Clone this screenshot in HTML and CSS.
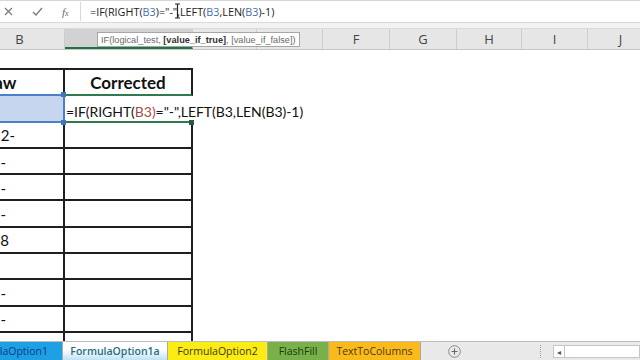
FILE: index.html
```html
<!DOCTYPE html>
<html lang="en">
<head>
    <meta charset="UTF-8">
    <meta name="viewport" content="width=device-width, initial-scale=1.0">
    <title>FormulaOption1a - Trailing minus</title>
    <link rel="stylesheet" href="styles.css">
</head>
<body>
    <div class="app">
        <!-- barre de formule -->
        <div class="formula-bar">
            <div class="fb-buttons">
                <svg class="fb-cancel" width="9" height="9" viewBox="0 0 9 9">
                    <path d="M1 1 L8 8 M8 1 L1 8" stroke="#7a7a7a" stroke-width="1.2" fill="none"/>
                </svg>
                <svg class="fb-enter" width="11" height="9" viewBox="0 0 11 9">
                    <path d="M1 5 L4 8 L10 1" stroke="#7a7a7a" stroke-width="1.3" fill="none"/>
                </svg>
                <span class="fb-fx">f<small>x</small></span>
            </div>
            <div class="fb-input">
                <span class="fb-text">=IF(RIGHT(<span class="ref">B3</span>)="-",LEFT(<span class="ref">B3</span>,LEN(<span class="ref">B3</span>)-1)</span>
                <svg class="ibeam" width="7" height="16" viewBox="0 0 7 16">
                    <path d="M1 1 H6 M3.5 1 V15 M1 15 H6" stroke="#222" stroke-width="1.2" fill="none"/>
                </svg>
            </div>
        </div>
        <div class="fb-gap"></div>

        <!-- en-tetes de colonnes -->
        <div class="col-headers">
            <div class="col-track">
                <div class="col-head w-b">B</div>
                <div class="col-head w-c selected"></div>
                <div class="col-head w-d"></div>
                <div class="col-head w-e"></div>
                <div class="col-head w-f">F</div>
                <div class="col-head w-g">G</div>
                <div class="col-head w-h">H</div>
                <div class="col-head w-i">I</div>
                <div class="col-head w-j">J</div>
            </div>
            <div class="tooltip">IF(logical_test, <b>[value_if_true]</b>, [value_if_false])</div>
        </div>

        <!-- feuille -->
        <div class="sheet">
            <div class="table">
                <div class="cell head">Raw</div>
                <div class="cell head head-active">Corrected</div>

                <div class="cell ref-cell"><span class="corner top"></span><span class="corner bottom"></span></div>
                <div class="cell editing">=IF(RIGHT(<span class="ref-red">B3</span><span class="paren">)</span>="-",LEFT(B3,LEN(B3)-1)<span class="fill-handle"></span></div>

                <div class="cell raw raw-long">45678912-</div><div class="cell"></div>
                <div class="cell raw raw-short">1234567 -</div><div class="cell"></div>
                <div class="cell raw raw-short">7654321 -</div><div class="cell"></div>
                <div class="cell raw raw-short">9876543 -</div><div class="cell"></div>
                <div class="cell raw raw-mid">12345678</div><div class="cell"></div>
                <div class="cell"></div><div class="cell"></div>
                <div class="cell raw raw-short">3456789 -</div><div class="cell"></div>
                <div class="cell raw raw-short">2468135 -</div><div class="cell"></div>
                <div class="cell"></div><div class="cell"></div>
            </div>
        </div>

        <!-- onglets -->
        <div class="tabs">
            <div class="tab tab-blue"><span>FormulaOption1</span></div>
            <div class="tab tab-active">FormulaOption1a</div>
            <div class="tab tab-yellow">FormulaOption2</div>
            <div class="tab tab-green">FlashFill</div>
            <div class="tab tab-orange">TextToColumns</div>
            <div class="tab-add">
                <svg width="13" height="13" viewBox="0 0 13 13">
                    <circle cx="6.5" cy="6.5" r="5.8" stroke="#8a8a8a" stroke-width="1" fill="none"/>
                    <path d="M6.5 3.5 V9.5 M3.5 6.5 H9.5" stroke="#666" stroke-width="1.1"/>
                </svg>
            </div>
            <div class="tab-split"></div>
            <div class="hscroll">
                <div class="hscroll-btn">◂</div>
                <div class="hscroll-track"></div>
            </div>
        </div>
    </div>
</body>
</html>
```

FILE: styles.css
```css
* {
    margin: 0;
    padding: 0;
    box-sizing: border-box;
}

body {
    width: 640px;
    height: 360px;
    overflow: hidden;
    background: #ffffff;
    font-family: 'Open Sans', 'Liberation Sans', sans-serif;
    color: #222;
}

.app {
    display: flex;
    flex-direction: column;
    height: 360px;
}

/* barre de formule */
.formula-bar {
    height: 23px;
    display: flex;
    border-top: 1px solid #d6d6d6;
    border-bottom: 1px solid #dadada;
    background: #ffffff;
}

.fb-buttons {
    width: 81px;
    display: flex;
    align-items: center;
    padding-left: 4px;
    border-right: 1px solid #d9d9d9;
    margin: 1px 0;
}

.fb-enter {
    margin-left: 19px;
}

.fb-fx {
    margin-left: 19px;
    font-family: 'Liberation Serif', serif;
    font-style: italic;
    font-size: 11px;
    color: #666;
}

.fb-fx small {
    font-size: 8px;
}

.fb-input {
    flex: 1;
    position: relative;
    display: flex;
    align-items: center;
    padding-left: 9px;
    font-size: 10.8px;
    color: #222;
}

.fb-text {
    white-space: nowrap;
}

.fb-input .ref {
    color: #4a6fae;
}

.ibeam {
    position: absolute;
    left: 93px;
    top: 2px;
}

.fb-gap {
    height: 5px;
    background: #f2f2f2;
}

/* en-tetes de colonnes */
.col-headers {
    position: relative;
    height: 22px;
    background: #e6e6e6;
    border-top: 1px solid #d9d9d9;
    border-bottom: 1px solid #c4c4c4;
    overflow: hidden;
}

.col-track {
    display: flex;
    height: 100%;
    margin-left: -25px;
}

.col-head {
    flex-shrink: 0;
    display: flex;
    align-items: center;
    justify-content: center;
    border-right: 1px solid #cdcdcd;
    font-size: 13px;
    color: #444;
}

.col-head.selected {
    background: #d2d2d2;
    border-bottom: 2px solid #217346;
}

.w-b { width: 90px; }
.w-c { width: 128px; }
.w-d { width: 64px; }
.w-e { width: 66px; }
.w-f { width: 67px; }
.w-g { width: 67px; }
.w-h { width: 65px; }
.w-i { width: 66px; }
.w-j { width: 66px; }

.tooltip {
    position: absolute;
    left: 97px;
    top: 3px;
    height: 15px;
    padding: 0 3px;
    display: flex;
    align-items: center;
    background: #ffffff;
    border: 1px solid #a6a6a6;
    font-family: 'Liberation Sans', sans-serif;
    font-size: 9.2px;
    color: #6a6a6a;
    white-space: pre;
}

.tooltip b {
    color: #333;
}

/* feuille */
.sheet {
    flex: 1;
    overflow: hidden;
    background: #ffffff;
}

.table {
    display: grid;
    grid-template-columns: 128px 128px;
    grid-auto-rows: 26.3px;
    width: 256px;
    margin: 18px 0 0 -63px;
    border-top: 2px solid #1f1f1f;
}

.cell {
    position: relative;
    display: flex;
    align-items: center;
    padding: 1px 3px 0;
    border-right: 2px solid #1f1f1f;
    border-bottom: 2px solid #1f1f1f;
    font-family: 'Lato', 'Open Sans', sans-serif;
    font-size: 15px;
    color: #111;
    white-space: pre;
    overflow: hidden;
}

/* la colonne B est en partie hors ecran : on cale la fin du texte */
.cell.raw {
    justify-content: flex-end;
}

.raw-long { padding-right: 48px; }
.raw-mid { padding-right: 54px; }
.raw-short { padding-right: 57px; }

.cell.head {
    justify-content: center;
    font-weight: 700;
    font-size: 17px;
}

.cell.head:first-child {
    border-bottom-color: #4a7fc9;
}

.head-active {
    border-bottom-color: #2f7a4f !important;
}

.ref-cell {
    background: #c6d6ee;
    border-right-color: #4a7fc9;
    border-bottom-color: #4a7fc9;
    overflow: visible;
}

.corner {
    position: absolute;
    right: -3px;
    width: 5px;
    height: 5px;
    background: #3f74c2;
    z-index: 2;
}

.corner.top { top: -4px; }
.corner.bottom { bottom: -4px; }

.editing {
    align-items: flex-end;
    padding: 0 0 1px 1px;
    font-size: 14px;
    letter-spacing: -0.05px;
    border-right-color: transparent;
    border-bottom-color: #2f7a4f;
    overflow: visible;
    z-index: 1;
}

.ref-red {
    color: #a24d45;
}

.paren {
    color: #c8433d;
}

.fill-handle {
    position: absolute;
    left: 124px;
    bottom: -4px;
    width: 5px;
    height: 5px;
    background: #2b5b3c;
}

/* onglets */
.tabs {
    height: 19px;
    flex-shrink: 0;
    display: flex;
    align-items: stretch;
    background: #e9e9e9;
    border-top: 1px solid #bdbdbd;
    font-size: 10.5px;
}

.tab {
    display: flex;
    align-items: center;
    justify-content: center;
    border-right: 1px solid #a9a9a9;
    white-space: nowrap;
    overflow: hidden;
}

.tab-blue {
    width: 63px;
    justify-content: flex-end;
    padding-right: 14px;
    background: #1ea0e4;
    color: #0c3a8a;
}

.tab-active {
    width: 105px;
    background: linear-gradient(#ffffff 40%, #bfe2f4);
    color: #256e86;
    font-weight: 600;
}

.tab-yellow {
    width: 100px;
    background: #fbec14;
    color: #3d3a10;
}

.tab-green {
    width: 61px;
    background: #78b04a;
    color: #1b3a10;
}

.tab-orange {
    width: 92px;
    background: #fbba1c;
    color: #4a3a10;
}

.tab-add {
    display: flex;
    align-items: center;
    margin-left: 27px;
}

.tab-split {
    width: 1px;
    margin: 3px 0 2px 79px;
    border-left: 1px dotted #a0a0a0;
}

.hscroll {
    flex: 1;
    display: flex;
    align-items: center;
    margin-left: 12px;
}

.hscroll-btn {
    width: 12px;
    height: 13px;
    display: flex;
    align-items: center;
    justify-content: center;
    background: #ffffff;
    border: 1px solid #c6c6c6;
    font-size: 8px;
    color: #555;
}

.hscroll-track {
    flex: 1;
    height: 13px;
    background: #ffffff;
    border: 1px solid #c6c6c6;
    border-left: none;
}
```
